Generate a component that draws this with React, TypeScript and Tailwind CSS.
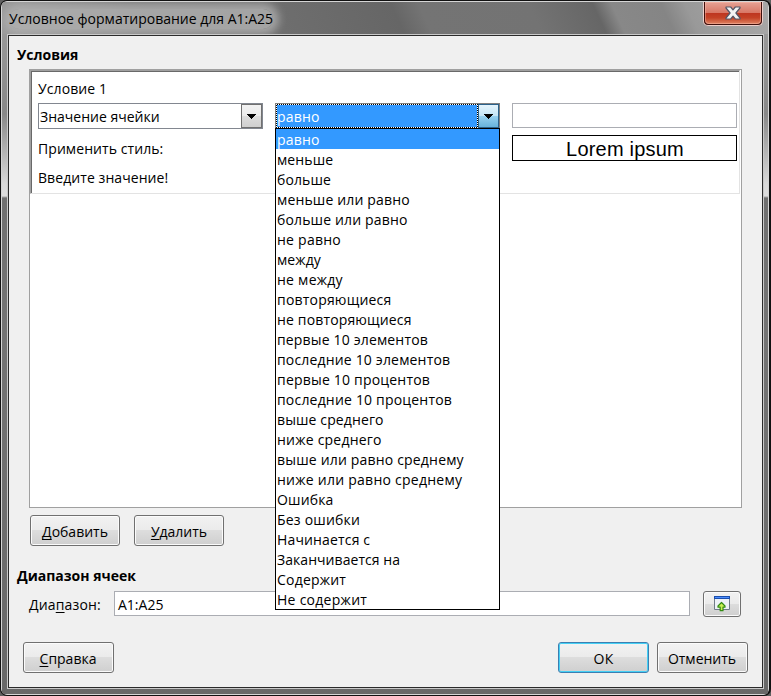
import type { ReactNode } from 'react';

const operators: [string, string][] = [
  ['равно', 'tracking-[0.2px]'],
  ['меньше', 'tracking-[0.1px]'],
  ['больше', 'tracking-[0.1px]'],
  ['меньше или равно', 'tracking-[0.15px]'],
  ['больше или равно', 'tracking-[0.15px]'],
  ['не равно', 'tracking-[0.25px]'],
  ['между', 'tracking-[0.1px]'],
  ['не между', 'tracking-[0.25px]'],
  ['повторяющиеся', 'tracking-[0.2px]'],
  ['не повторяющиеся', 'tracking-[0.15px]'],
  ['первые 10 элементов', 'tracking-[0.16px]'],
  ['последние 10 элементов', 'tracking-[0.17px]'],
  ['первые 10 процентов', 'tracking-[0.2px]'],
  ['последние 10 процентов', 'tracking-[0.19px]'],
  ['выше среднего', 'tracking-[0.12px]'],
  ['ниже среднего', 'tracking-[0.22px]'],
  ['выше или равно среднему', 'tracking-[0.18px]'],
  ['ниже или равно среднему', 'tracking-[0.25px]'],
  ['Ошибка', 'tracking-[0.15px]'],
  ['Без ошибки', 'tracking-[0.2px]'],
  ['Начинается с', 'tracking-[0.15px]'],
  ['Заканчивается на', 'tracking-[0.05px]'],
  ['Содержит', 'tracking-[0.2px]'],
  ['Не содержит', 'tracking-[0.27px]'],
];

function Key({ children }: { children: ReactNode }) {
  return <span className="underline decoration-1 underline-offset-2 [text-decoration-skip-ink:none]">{children}</span>;
}

function Button({ children, className = '', primary = false }: { children: ReactNode; className?: string; primary?: boolean }) {
  const edge = primary
    ? 'border-[#3c7fb1] shadow-[inset_0_0_0_1px_#45d0f5]'
    : 'border-[#707070] shadow-[inset_0_0_0_1px_#fbfbfb]';
  return (
    <button
      className={`flex h-[31px] shrink-0 items-center justify-center rounded-[3px] border bg-[linear-gradient(#f2f2f2_0%,#ebebeb_48%,#dddddd_50%,#cfcfcf_100%)] leading-[17px] ${edge} ${className}`}
    >
      {children}
    </button>
  );
}

function Arrow() {
  return (
    <svg width="9" height="5" viewBox="0 0 9 5" shapeRendering="crispEdges">
      <path d="M0 0h9L5 5H4z" fill="#000" />
    </svg>
  );
}

function CloseButton() {
  return (
    <div className="mr-[5px] flex h-6 w-[60px] items-start justify-center overflow-hidden rounded-b-[5px] border border-t-0 border-[#efcfcb] bg-[#40100c] px-px pb-px">
      <div className="flex h-[22px] w-full items-center justify-center rounded-b-[4px] bg-[linear-gradient(#e6a295_0%,#d87866_48%,#bd3520_50%,#c44226_72%,#df8362_100%)] shadow-[inset_0_0_0_1px_rgba(255,190,175,0.45)]">
        <svg width="16" height="14" viewBox="0 0 16 14">
          <path
            d="M1 1h4.700L8 3.800 10.300 1H15v1L10.900 7l4.100 5v1h-4.700L8 10.200 5.700 13H1v-1l4.100-5L1 2z"
            fill="#f3f3f3"
            stroke="#535666"
            strokeWidth="1.200"
            strokeLinejoin="round"
          />
        </svg>
      </div>
    </div>
  );
}

function ShrinkIcon() {
  return (
    <svg width="16" height="16" viewBox="0 0 16 16">
      <path d="M.5.500h15v13H.500z" fill="#edf1f7" stroke="#707b88" />
      <path d="M0 0h16v3H0z" fill="#1b4fad" />
      <path d="M1 1h14v1H1z" fill="#4c8dff" />
      <path d="M7.500 6.500 11 10v1.200H9v3.500H6.200v-3.500H4V10z" fill="#c9ef55" stroke="#328b13" strokeWidth="1.200" strokeLinejoin="round" />
    </svg>
  );
}

function OperatorList() {
  return (
    <ul className="absolute -left-px top-[24px] z-10 h-[482px] w-[225px] border border-black bg-white text-black">
      {operators.map(([label, tracking], i) => (
        <li
          key={label}
          className={`h-5 whitespace-nowrap pl-px leading-[21px] ${tracking} ${i === 0 ? 'bg-[#3399ff] text-white' : ''}`}
        >
          {label}
        </li>
      ))}
    </ul>
  );
}

function Condition() {
  return (
    <section className="h-[124px] border border-b-[#e3e3e3] border-l-[#a0a0a0] border-r-[#e3e3e3] border-t-[#a0a0a0] pl-[7px] shadow-[inset_1px_1px_0_#696969]">
      <div className="mt-[5px] h-[27px] leading-[26px] tracking-[0.1px]">Условие 1</div>
      <div className="flex gap-3">
        <div className="w-[225px]">
          <div className="flex h-[26px] items-stretch border border-[#828790]">
            <div className="flex-1 pl-px leading-[26px]">Значение ячейки</div>
            <div className="flex w-[21px] items-center justify-center border border-[#707070] bg-[linear-gradient(#f2f2f2_0%,#ebebeb_48%,#dddddd_50%,#cfcfcf_100%)]">
              <Arrow />
            </div>
          </div>
          <div className="mt-[7px] h-[26px] leading-[26px] tracking-[0.07px]">Применить стиль:</div>
          <div className="mt-[3px] h-[26px] leading-[26px] tracking-[0.07px]">Введите значение!</div>
        </div>
        <div className="relative h-[26px] w-[225px] border border-[#808080]">
          <div className="flex h-6">
            <div className="flex-1 bg-[repeating-conic-gradient(#000_0%_25%,#fff_0%_50%)] bg-[length:2px_2px] p-px">
              <div className="h-[22px] bg-[#3399ff] leading-[24px] tracking-[0.2px] text-white">равно</div>
            </div>
            <div className="flex w-[21px] items-center justify-center border border-[#2c628b] bg-[linear-gradient(#e5f4fc_0%,#c4e5f6_48%,#98d1ef_50%,#68b3db_100%)]">
              <Arrow />
            </div>
          </div>
          <OperatorList />
        </div>
        <div className="w-[225px]">
          <div className="h-[25px] border border-[#abadb3]" />
          <div className="mt-[7px] h-[26px] overflow-hidden border border-black pl-px text-center font-['Liberation_Sans',Arial,sans-serif] text-[20px] leading-[27px] tracking-[0.2px]">
            Lorem ipsum
          </div>
        </div>
      </div>
    </section>
  );
}

export default function App() {
  return (
    <div className="h-[696px] w-[771px] bg-[#606060] font-['Open_Sans','Noto_Sans',sans-serif] text-[14px] text-black">
      <div className="flex h-[696px] flex-col overflow-hidden rounded-[7px] border border-r-2 border-[#111]">
        <div className="flex h-[694px] flex-col rounded-[6px] border border-[#d5d5d5] bg-[#747474]">
          <header className="flex h-8 items-start justify-between overflow-hidden bg-[linear-gradient(65deg,#9b9b9b_0px,#777_130px,#6b6b6b_300px,#666_365px,#747474_390px,#737373_490px,#666_548px,#888_565px,#858585_610px,#999_632px,#a7a7a7_700px)]">
            <div className="ml-[7px] h-8 leading-[33px]">
              <span className="inline-block rounded-full bg-[#b1b1b1]/80 leading-[20px] shadow-[0_0_9px_6px_#b1b1b1cc]">
                Условное форматирование для A1:A25
              </span>
            </div>
            <CloseButton />
          </header>
          <div className="flex flex-1 bg-[linear-gradient(#999_0px,#888_80px,#d9d9d9_150px,#dddddd_162px,#707070_164px,#747474_300px,#686868_100%)]">
            <main className="ml-[5px] flex h-[655px] w-[757px] flex-col border border-[#c9c9c9]">
              <div className="flex flex-1 flex-col border border-[#2b2b2b] bg-[#f0f0f0]">
                <h2 className="ml-2 mt-2 h-[25px] font-bold leading-[22px]">Условия</h2>
                <div className="ml-5 h-[439px] w-[713px] border border-[#a0a0a0] bg-white pr-px">
                  <Condition />
                </div>
                <div className="ml-[21px] mt-[7px] flex gap-3.5">
                  <Button className="w-[90px] pt-px"><span><Key>Д</Key>обавить</span></Button>
                  <Button className="w-[90px] pt-px"><span><Key>У</Key>далить</span></Button>
                </div>
                <h2 className="ml-2 mt-5 h-[22px] font-bold leading-[20px]">Диапазон ячеек</h2>
                <div className="ml-5 mt-[3px] flex items-start">
                  <label className="w-[85px] leading-[27px] tracking-[0.15px]">Диа<Key>п</Key>азон:</label>
                  <div className="h-[25px] w-[576px] border border-[#abadb3] bg-white pl-[3px] leading-[25px]">A1:A25</div>
                  <Button className="ml-[13px] h-[26px]! w-[38px]"><ShrinkIcon /></Button>
                </div>
                <footer className="ml-3.5 mt-[24px] flex">
                  <Button className="w-[91px] pr-px pt-px"><span><Key>С</Key>правка</span></Button>
                  <Button primary className="ml-[444px] w-[91px] pt-px tracking-[0.3px]">ОК</Button>
                  <Button className="ml-2 w-[91px] pr-px pt-px">Отменить</Button>
                </footer>
              </div>
            </main>
          </div>
        </div>
      </div>
    </div>
  );
}
